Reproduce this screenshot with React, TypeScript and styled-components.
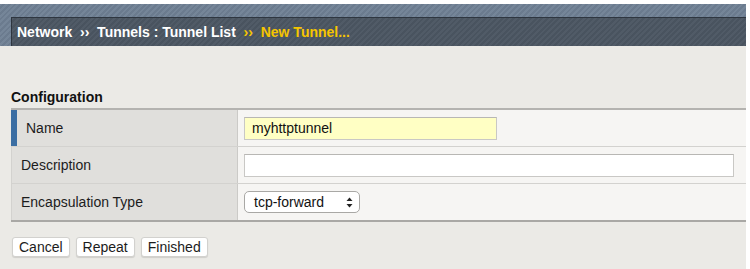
import React from "react";
import styled, { createGlobalStyle } from "styled-components";

const GlobalStyle = createGlobalStyle`
  html, body {
    margin: 0;
    padding: 0;
    background: #ffffff;
    font-family: "Liberation Sans", Arial, Helvetica, sans-serif;
  }
`;

const Page = styled.div`
  width: 746px;
  height: 269px;
  margin-top: 4px;
  background: #ebeae6;
  display: flex;
  flex-direction: column;
`;

const Banner = styled.div`
  padding: 13px 0 0 11px;
  background-color: #6e7f93;
  background-image: repeating-linear-gradient(
    135deg,
    rgba(255, 255, 255, 0.05) 0 2px,
    rgba(0, 0, 0, 0.03) 2px 4px
  );
`;

const Crumbs = styled.div`
  height: 28px;
  display: flex;
  align-items: center;
  padding-left: 5px;
  background-color: #4b5662;
  background-image: repeating-linear-gradient(
    135deg,
    rgba(255, 255, 255, 0.03) 0 2px,
    rgba(0, 0, 0, 0.03) 2px 4px
  );
  border-top: 1px solid #2e3640;
  border-left: 1px solid #2e3640;
  font-size: 14px;
  font-weight: bold;
  color: #ffffff;
  white-space: pre;
`;

const Current = styled.span`
  color: #f6c500;
`;

const Content = styled.div`
  padding: 0 0 0 11px;
`;

const SectionTitle = styled.div`
  margin-top: 43px;
  height: 19px;
  font-size: 14px;
  font-weight: bold;
  color: #111;
`;

const Table = styled.div`
  border-top: 2px solid #b4b3b0;
  border-bottom: 2px solid #a9a8a5;
`;

const Row = styled.div<{ $last?: boolean }>`
  display: grid;
  grid-template-columns: 227px 1fr;
  height: ${(p) => (p.$last ? "36px" : "37px")};
  box-sizing: border-box;
  border-bottom: ${(p) => (p.$last ? "none" : "1px solid #d3d2cf")};
`;

const Label = styled.div<{ $active?: boolean }>`
  display: flex;
  align-items: center;
  padding-left: 9px;
  background: #e0dfdc;
  border-right: 1px solid #cbcac7;
  border-left: ${(p) => (p.$active ? "6px solid #3b6ea3" : "1px solid #d3d2cf")};
  font-size: 14px;
  color: #1c1c1c;
`;

const Value = styled.div`
  display: flex;
  align-items: center;
  padding-left: 6px;
  background: #f6f5f3;
`;

const TextInput = styled.input<{ $width: number; $filled?: boolean }>`
  box-sizing: border-box;
  width: ${(p) => p.$width}px;
  height: 23px;
  padding: 0 7px;
  border: 1px solid #c9c8c5;
  border-top-color: #b8b7b4;
  background: ${(p) => (p.$filled ? "#ffffc4" : "#ffffff")};
  font-family: "Liberation Sans", Arial, sans-serif;
  font-size: 14px;
  color: #111;
  outline: none;
`;

const SelectBox = styled.div`
  box-sizing: border-box;
  width: 116px;
  height: 22px;
  display: flex;
  align-items: center;
  justify-content: space-between;
  padding: 0 6px 0 9px;
  background: #ffffff;
  border: 1px solid #a9a8a5;
  border-radius: 5px;
  font-size: 14px;
  color: #111;
`;

const Buttons = styled.div`
  display: flex;
  gap: 6px;
  margin-top: 15px;
  padding-left: 1px;
`;

const Button = styled.button`
  height: 20px;
  padding: 0 6px;
  background: #ffffff;
  border: 1px solid #d2d1ce;
  border-radius: 3px;
  box-shadow: 0 1px 1px rgba(0, 0, 0, 0.12);
  font-family: "Liberation Sans", Arial, sans-serif;
  font-size: 14px;
  color: #1c1c1c;
`;

const Arrows = () => (
  <svg width="7" height="11" viewBox="0 0 7 11">
    <path d="M3.5 0.5 L6.5 4 L0.5 4 Z" fill="#222" />
    <path d="M3.5 10.5 L6.5 7 L0.5 7 Z" fill="#222" />
  </svg>
);

export default function App() {
  return (
    <>
      <GlobalStyle />
      <Page>
        <Banner>
          <Crumbs>
            {"Network  ››  Tunnels : Tunnel List  "}
            <Current>{"››  New Tunnel..."}</Current>
          </Crumbs>
        </Banner>
        <Content>
          <SectionTitle>Configuration</SectionTitle>
          <Table>
            <Row>
              <Label $active>Name</Label>
              <Value>
                <TextInput $width={253} $filled defaultValue="myhttptunnel" />
              </Value>
            </Row>
            <Row>
              <Label>Description</Label>
              <Value>
                <TextInput $width={490} />
              </Value>
            </Row>
            <Row $last>
              <Label>Encapsulation Type</Label>
              <Value>
                <SelectBox>
                  <span>tcp-forward</span>
                  <Arrows />
                </SelectBox>
              </Value>
            </Row>
          </Table>
          <Buttons>
            <Button>Cancel</Button>
            <Button>Repeat</Button>
            <Button>Finished</Button>
          </Buttons>
        </Content>
      </Page>
    </>
  );
}
